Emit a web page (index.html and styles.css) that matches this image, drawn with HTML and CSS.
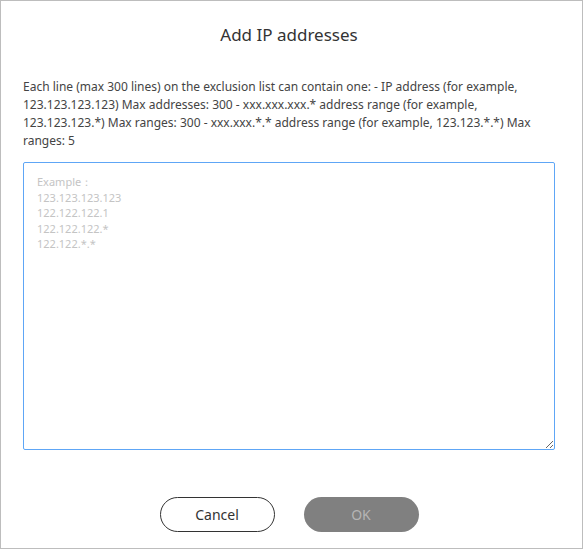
FILE: index.html
```html
<!DOCTYPE html>
<html lang="en">
<head>
<meta charset="utf-8">
<title>Add IP addresses</title>
<link rel="stylesheet" href="styles.css">
</head>
<body>
<div class="dialog">
  <h1 class="title">Add IP addresses</h1>
  <p class="desc">Each line (max 300 lines) on the exclusion list can contain one: - IP address (for example, 123.123.123.123) Max addresses: 300 - xxx.xxx.xxx.* address range (for example, 123.123.123.*) Max ranges: 300 - xxx.xxx.*.* address range (for example, 123.123.*.*) Max ranges: 5</p>
  <textarea class="ip-list" placeholder="Example：&#10;123.123.123.123&#10;122.122.122.1&#10;122.122.122.*&#10;122.122.*.*"></textarea>
  <div class="actions">
    <button class="btn btn-cancel" type="button">Cancel</button>
    <button class="btn btn-ok" type="button" disabled>OK</button>
  </div>
</div>
</body>
</html>
```

FILE: styles.css
```css
html, body {
  margin: 0;
  padding: 0;
  background: #ffffff;
}
body {
  font-family: "Noto Sans", "Liberation Sans", sans-serif;
  color: #333333;
}
.dialog {
  box-sizing: border-box;
  width: 583px;
  height: 549px;
  border: 1px solid #bdbdbd;
  padding: 0 27px 0 22px;
  display: flex;
  flex-direction: column;
}
.title {
  margin: 22px 0 0;
  font-size: 17px;
  font-weight: 400;
  line-height: 24px;
  text-align: center;
  color: #333333;
}
.desc {
  margin: 31px 0 0;
  font-size: 12px;
  line-height: 18px;
  color: #444444;
}
.ip-list {
  box-sizing: border-box;
  margin: 12px 0 0 0;
  width: 532px;
  height: 288px;
  border: 1px solid #5ea6f6;
  border-radius: 2px;
  padding: 11px 13px;
  font-family: "Noto Sans", "Liberation Sans", sans-serif;
  font-size: 11px;
  line-height: 15.5px;
  color: #333333;
  outline: none;
  resize: both;
}
.ip-list::placeholder {
  color: #c4c4c4;
}
.actions {
  margin-top: 47px;
  display: flex;
  justify-content: center;
  gap: 29px;
}
.btn {
  box-sizing: border-box;
  width: 115px;
  height: 35px;
  border-radius: 18px;
  font-family: "Noto Sans", "Liberation Sans", sans-serif;
  font-size: 14px;
  cursor: pointer;
}
.btn-cancel {
  background: #ffffff;
  border: 1px solid #333333;
  color: #333333;
}
.btn-ok {
  background: #808080;
  border: none;
  color: #b5b5b5;
}
```
